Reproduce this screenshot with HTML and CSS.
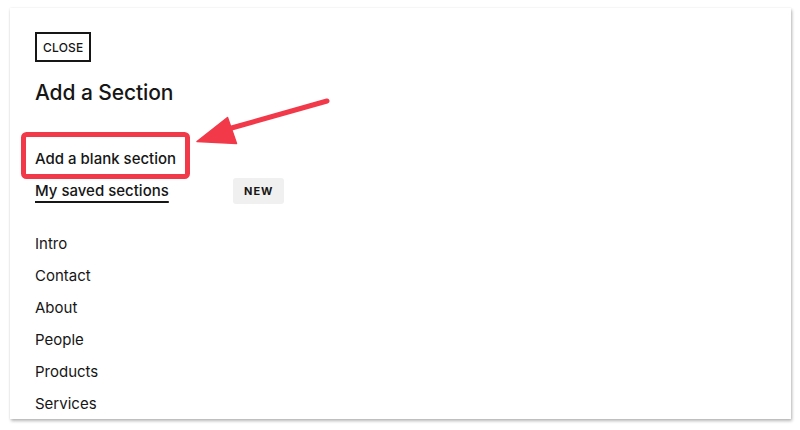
FILE: index.html
```html
<!DOCTYPE html>
<html lang="en">

<head>
    <meta charset="UTF-8">
    <meta name="viewport" content="width=device-width, initial-scale=1.0">
    <title>Add a Section</title>
    <link rel="stylesheet" href="styles.css">
</head>

<body>
    <section class="panel">
        <button class="close">CLOSE</button>
        <h1 class="title">Add a Section</h1>

        <ul class="group">
            <li>Add a blank section</li>
            <li class="saved-row">
                <span class="saved">My saved sections</span>
                <span class="badge">NEW</span>
            </li>
        </ul>

        <ul class="group list">
            <li>Intro</li>
            <li>Contact</li>
            <li>About</li>
            <li>People</li>
            <li>Products</li>
            <li>Services</li>
        </ul>
    </section>

    <!-- annotation drawn over the screenshot -->
    <svg class="annotation" width="800" height="430" viewBox="0 0 800 430">
        <rect x="23.5" y="134.5" width="164" height="42" rx="3" fill="none" stroke="#f2394a" stroke-width="5" />
        <line x1="327" y1="101" x2="228" y2="129" stroke="#f2394a" stroke-width="5" stroke-linecap="round" />
        <polygon points="197,141.5 227.5,117.5 236.5,143.5" fill="#f2394a" stroke="#f2394a" stroke-width="1.5" stroke-linejoin="round" />
    </svg>
</body>

</html>
```

FILE: styles.css
```css
body {
    margin: 0;
    padding: 0;
    background-color: #ffffff;
    font-family: "Inter", "Liberation Sans", sans-serif;
    color: #161616;
    position: relative;
}

.panel {
    box-sizing: border-box;
    height: 411px;
    margin: 8px 9px 11px 10px;
    padding: 24px 25px 0 25px;
    background-color: #ffffff;
    box-shadow: 1px 2px 3px rgba(0, 0, 0, 0.28), 0 0 2px rgba(0, 0, 0, 0.08);
    overflow: hidden;
}

.close {
    display: flex;
    align-items: center;
    box-sizing: border-box;
    height: 30px;
    padding: 0 6px;
    background-color: #ffffff;
    border: 2px solid #161616;
    border-radius: 0;
    font-family: inherit;
    font-size: 12px;
    font-weight: 500;
    letter-spacing: 0.2px;
    color: #161616;
}

.title {
    margin: 18px 0 0 0;
    font-size: 21px;
    line-height: 26px;
    font-weight: 500;
    letter-spacing: -0.1px;
}

.group {
    list-style: none;
    margin: 37px 0 0 0;
    padding: 0;
    font-size: 15px;
    line-height: 32px;
    font-weight: 500;
}

.list {
    margin-top: 21px;
    font-weight: 400;
}

.saved-row {
    display: grid;
    grid-template-columns: 198px auto;
    align-items: center;
    justify-content: start;
}

.saved {
    text-decoration: underline;
    text-decoration-thickness: 2px;
    text-underline-offset: 5px;
}

.badge {
    display: inline-block;
    height: 26px;
    line-height: 26px;
    padding: 0 11px;
    background-color: #f0f0f0;
    border-radius: 3px;
    font-size: 11px;
    font-weight: 700;
    letter-spacing: 1px;
}

.annotation {
    position: absolute;
    left: 0;
    top: 0;
    pointer-events: none;
}
```
